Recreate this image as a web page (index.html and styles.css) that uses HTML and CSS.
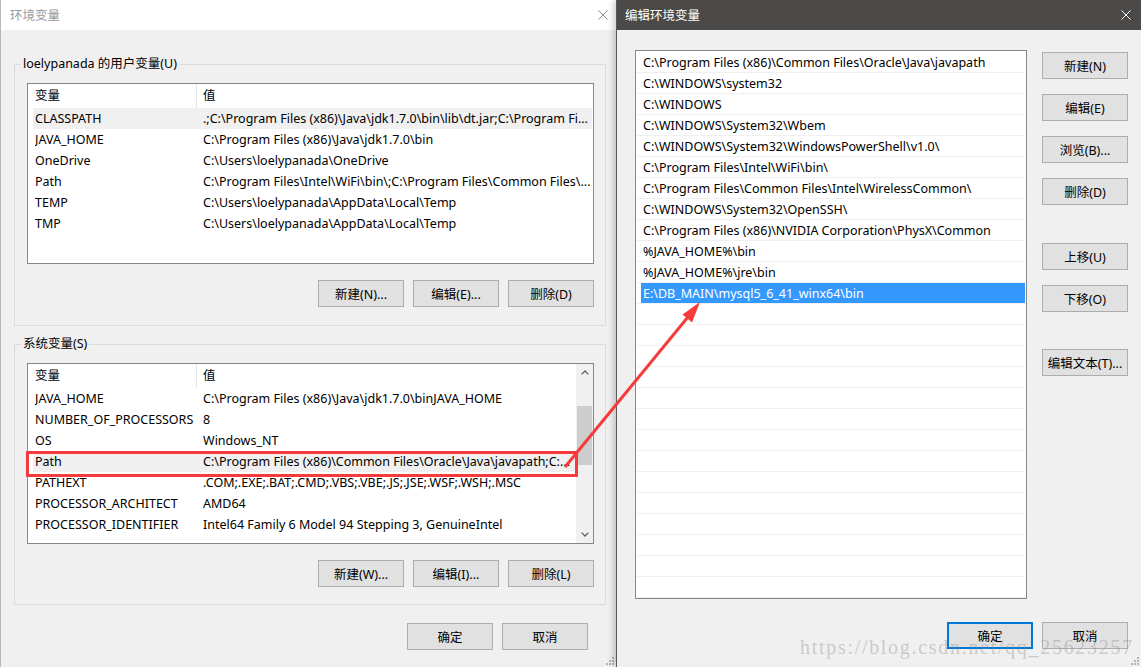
FILE: index.html
```html
<!DOCTYPE html>
<html lang="zh-CN">

<head>
    <meta charset="UTF-8">
    <title>环境变量</title>
    <link rel="stylesheet" href="styles.css">
</head>

<body>
    <div class="desk">

        <!-- 环境变量 dialog (inactive) -->
        <div class="dialog env-dialog">
            <div class="titlebar">
                <span class="title">环境变量</span>
                <svg class="close" viewBox="0 0 10 10"><path d="M0.5 0.5L9.5 9.5M9.5 0.5L0.5 9.5" /></svg>
            </div>
            <div class="env-body">
                <fieldset class="group user-group">
                    <legend>loelypanada 的用户变量(U)</legend>
                    <div class="group-body">
                        <div class="listview">
                            <div class="lv-head">
                                <span class="col-name">变量</span>
                                <span class="col-value">值</span>
                            </div>
                            <div class="lv-row selected"><span class="col-name">CLASSPATH</span><span class="col-value">.;C:\Program Files (x86)\Java\jdk1.7.0\bin\lib\dt.jar;C:\Program Fi...</span></div>
                            <div class="lv-row"><span class="col-name">JAVA_HOME</span><span class="col-value">C:\Program Files (x86)\Java\jdk1.7.0\bin</span></div>
                            <div class="lv-row"><span class="col-name">OneDrive</span><span class="col-value">C:\Users\loelypanada\OneDrive</span></div>
                            <div class="lv-row"><span class="col-name">Path</span><span class="col-value">C:\Program Files\Intel\WiFi\bin\;C:\Program Files\Common Files\...</span></div>
                            <div class="lv-row"><span class="col-name">TEMP</span><span class="col-value">C:\Users\loelypanada\AppData\Local\Temp</span></div>
                            <div class="lv-row"><span class="col-name">TMP</span><span class="col-value">C:\Users\loelypanada\AppData\Local\Temp</span></div>
                        </div>
                        <div class="button-row">
                            <button class="btn">新建(N)...</button>
                            <button class="btn">编辑(E)...</button>
                            <button class="btn">删除(D)</button>
                        </div>
                    </div>
                </fieldset>

                <fieldset class="group sys-group">
                    <legend>系统变量(S)</legend>
                    <div class="group-body">
                        <div class="listview with-scroll">
                            <div class="lv-main">
                                <div class="lv-head">
                                    <span class="col-name">变量</span>
                                    <span class="col-value">值</span>
                                </div>
                                <div class="lv-row"><span class="col-name">JAVA_HOME</span><span class="col-value">C:\Program Files (x86)\Java\jdk1.7.0\binJAVA_HOME</span></div>
                                <div class="lv-row"><span class="col-name">NUMBER_OF_PROCESSORS</span><span class="col-value">8</span></div>
                                <div class="lv-row"><span class="col-name">OS</span><span class="col-value">Windows_NT</span></div>
                                <div class="lv-row selected"><span class="col-name">Path</span><span class="col-value">C:\Program Files (x86)\Common Files\Oracle\Java\javapath;C:...</span></div>
                                <div class="lv-row"><span class="col-name">PATHEXT</span><span class="col-value">.COM;.EXE;.BAT;.CMD;.VBS;.VBE;.JS;.JSE;.WSF;.WSH;.MSC</span></div>
                                <div class="lv-row"><span class="col-name">PROCESSOR_ARCHITECT</span><span class="col-value">AMD64</span></div>
                                <div class="lv-row"><span class="col-name">PROCESSOR_IDENTIFIER</span><span class="col-value">Intel64 Family 6 Model 94 Stepping 3, GenuineIntel</span></div>
                            </div>
                            <div class="vscroll">
                                <div class="sb-arrow"><svg viewBox="0 0 8 5"><path d="M0.6 4.4L4 1L7.4 4.4" /></svg></div>
                                <div class="sb-track"><div class="sb-thumb"></div></div>
                                <div class="sb-arrow"><svg viewBox="0 0 8 5"><path d="M0.6 0.6L4 4L7.4 0.6" /></svg></div>
                            </div>
                        </div>
                        <div class="button-row">
                            <button class="btn">新建(W)...</button>
                            <button class="btn">编辑(I)...</button>
                            <button class="btn">删除(L)</button>
                        </div>
                    </div>
                </fieldset>

                <div class="dialog-foot env-foot">
                    <button class="btn">确定</button>
                    <button class="btn">取消</button>
                </div>
            </div>
            <svg class="grip" viewBox="0 0 10 10">
                <rect x="8" y="2" width="2" height="2" />
                <rect x="5" y="5" width="2" height="2" />
                <rect x="8" y="5" width="2" height="2" />
                <rect x="2" y="8" width="2" height="2" />
                <rect x="5" y="8" width="2" height="2" />
                <rect x="8" y="8" width="2" height="2" />
            </svg>
        </div>

        <!-- 编辑环境变量 dialog (active) -->
        <div class="dialog edit-dialog">
            <div class="titlebar">
                <span class="title">编辑环境变量</span>
                <svg class="close" viewBox="0 0 10 10"><path d="M0.5 0.5L9.5 9.5M9.5 0.5L0.5 9.5" /></svg>
            </div>
            <div class="edit-body">
                <div class="path-list">
                    <div class="path-row"><span class="path-cell">C:\Program Files (x86)\Common Files\Oracle\Java\javapath</span></div>
                    <div class="path-row"><span class="path-cell">C:\WINDOWS\system32</span></div>
                    <div class="path-row"><span class="path-cell">C:\WINDOWS</span></div>
                    <div class="path-row"><span class="path-cell">C:\WINDOWS\System32\Wbem</span></div>
                    <div class="path-row"><span class="path-cell">C:\WINDOWS\System32\WindowsPowerShell\v1.0\</span></div>
                    <div class="path-row"><span class="path-cell">C:\Program Files\Intel\WiFi\bin\</span></div>
                    <div class="path-row"><span class="path-cell">C:\Program Files\Common Files\Intel\WirelessCommon\</span></div>
                    <div class="path-row"><span class="path-cell">C:\WINDOWS\System32\OpenSSH\</span></div>
                    <div class="path-row"><span class="path-cell">C:\Program Files (x86)\NVIDIA Corporation\PhysX\Common</span></div>
                    <div class="path-row"><span class="path-cell">%JAVA_HOME%\bin</span></div>
                    <div class="path-row"><span class="path-cell">%JAVA_HOME%\jre\bin</span></div>
                    <div class="path-row selected"><span class="path-cell">E:\DB_MAIN\mysql5_6_41_winx64\bin</span></div>
                    <div class="path-row"><span class="path-cell"></span></div>
                    <div class="path-row"><span class="path-cell"></span></div>
                    <div class="path-row"><span class="path-cell"></span></div>
                    <div class="path-row"><span class="path-cell"></span></div>
                    <div class="path-row"><span class="path-cell"></span></div>
                    <div class="path-row"><span class="path-cell"></span></div>
                    <div class="path-row"><span class="path-cell"></span></div>
                    <div class="path-row"><span class="path-cell"></span></div>
                    <div class="path-row"><span class="path-cell"></span></div>
                    <div class="path-row"><span class="path-cell"></span></div>
                    <div class="path-row"><span class="path-cell"></span></div>
                    <div class="path-row"><span class="path-cell"></span></div>
                    <div class="path-row"><span class="path-cell"></span></div>
                    <div class="path-row"><span class="path-cell"></span></div>
                </div>
                <div class="side-buttons">
                    <button class="btn">新建(N)</button>
                    <button class="btn">编辑(E)</button>
                    <button class="btn">浏览(B)...</button>
                    <button class="btn">删除(D)</button>
                    <button class="btn move-up">上移(U)</button>
                    <button class="btn">下移(O)</button>
                    <button class="btn edit-text">编辑文本(T)...</button>
                </div>
            </div>
            <div class="dialog-foot edit-foot">
                <button class="btn primary">确定</button>
                <button class="btn">取消</button>
            </div>
            <svg class="grip" viewBox="0 0 10 10">
                <rect x="8" y="2" width="2" height="2" />
                <rect x="5" y="5" width="2" height="2" />
                <rect x="8" y="5" width="2" height="2" />
                <rect x="2" y="8" width="2" height="2" />
                <rect x="5" y="8" width="2" height="2" />
                <rect x="8" y="8" width="2" height="2" />
            </svg>
        </div>

        <!-- red annotation drawn over both dialogs -->
        <svg class="annot" viewBox="0 0 1141 667">
            <rect x="27.5" y="452.5" width="549" height="23" />
            <line x1="565" y1="467" x2="688" y2="317" />
            <polygon points="700,302 682.5,314.5 692,322.5" />
        </svg>

        <div class="watermark">https://blog.csdn.net/qq_25623257</div>
    </div>
</body>

</html>
```

FILE: styles.css
```css
html,
body {
    margin: 0;
    padding: 0;
}

body {
    font-family: "Noto Sans", "Noto Sans CJK SC", sans-serif;
    font-size: 12.5px;
    color: #000;
    background: #f0f0f0;
    overflow: hidden;
}

.desk {
    position: relative;
    display: flex;
    width: 1141px;
    height: 667px;
}

/* Dialog frames */
.dialog {
    position: relative;
    display: flex;
    flex-direction: column;
    background: #f0f0f0;
    box-sizing: border-box;
}

.env-dialog {
    width: 616px;
    flex-shrink: 0;
    border-left: 1px solid #b9b9b9;
}

.edit-dialog {
    flex: 1;
    border-left: 1px solid #5a5a5a;
    box-shadow: -3px 0 6px rgba(0, 0, 0, 0.18);
}

.titlebar {
    height: 30px;
    flex-shrink: 0;
    display: flex;
    align-items: center;
    justify-content: space-between;
    padding: 0 8px 1px 9px;
    box-sizing: border-box;
    background: #fff;
}

.env-dialog .title {
    color: #999;
}

.edit-dialog .titlebar {
    background: #4b4a48;
    padding: 0 10px 1px 8px;
}

.edit-dialog .title {
    color: #fff;
}

.close {
    width: 10px;
    height: 10px;
    fill: none;
    stroke: #8c8c8c;
    stroke-width: 1;
}

.edit-dialog .close {
    stroke: #fff;
}

/* Buttons */
.btn {
    width: 86px;
    height: 27px;
    margin: 0;
    padding: 0;
    box-sizing: border-box;
    border: 1px solid #adadad;
    background: #e1e1e1;
    font: inherit;
    color: #000;
    white-space: nowrap;
}

.btn.primary {
    border: 2px solid #0078d7;
}

/* Left dialog */
.env-body {
    padding: 26px 10px 0 13px;
}

.group {
    margin: 0;
    padding: 0;
    min-width: 0;
    border: 1px solid #dcdcdc;
}

.group legend {
    margin-left: 6px;
    padding: 0 2px;
    line-height: 16px;
}

.group + .group {
    margin-top: 10px;
}

.group-body {
    padding: 11px 11px 17px 12px;
}

.user-group .group-body {
    padding-bottom: 18px;
}

.listview {
    height: 181px;
    box-sizing: border-box;
    border: 1px solid #828790;
    background: #fff;
    overflow: hidden;
}

.listview.with-scroll {
    display: flex;
}

.lv-main {
    flex: 1;
    min-width: 0;
}

.lv-head {
    display: flex;
    height: 24px;
    line-height: 24px;
    padding-left: 7px;
}

.lv-head .col-name {
    width: 162px;
    box-sizing: border-box;
    border-right: 1px solid #e5e5e5;
}

.lv-head .col-value {
    padding-left: 6px;
}

.lv-row {
    display: flex;
    height: 21px;
    box-sizing: border-box;
    padding: 1px 0 0 2px;
    line-height: 20px;
    margin: 0 1px 0 5px;
    white-space: nowrap;
}

.lv-row.selected {
    background: #f0f0f0;
}

.lv-row .col-name {
    width: 168px;
    flex-shrink: 0;
    overflow: hidden;
}

.lv-row .col-value {
    flex: 1;
    min-width: 0;
    overflow: hidden;
}

/* Scrollbar of the system list */
.vscroll {
    width: 17px;
    flex-shrink: 0;
    display: flex;
    flex-direction: column;
    background: #f0f0f0;
}

.sb-arrow {
    height: 17px;
    display: flex;
    align-items: center;
    justify-content: center;
}

.sb-arrow svg {
    width: 8px;
    height: 5px;
    fill: none;
    stroke: #606060;
    stroke-width: 1.3;
}

.sb-track {
    flex: 1;
}

.sb-thumb {
    margin: 25px 1px 0;
    height: 59px;
    background: #cdcdcd;
}

.button-row {
    display: flex;
    justify-content: flex-end;
    gap: 9px;
    margin-top: 16px;
}

.dialog-foot {
    display: flex;
    justify-content: flex-end;
    gap: 9px;
}

.env-foot {
    padding: 18px 18px 0 0;
}

/* Right dialog */
.edit-body {
    display: flex;
    gap: 15px;
    padding: 20px 13px 0 18px;
}

.path-list {
    width: 392px;
    height: 549px;
    flex-shrink: 0;
    box-sizing: border-box;
    padding-top: 1px;
    border: 1px solid #828790;
    background: #fff;
    overflow: hidden;
}

.path-row {
    display: flex;
    height: 20px;
    margin: 0 1px;
    border-bottom: 1px solid #f0f0f0;
}

.path-cell {
    flex: 1;
    margin-left: 4px;
    padding: 1px 0 0 2px;
    line-height: 19px;
    white-space: nowrap;
}

.path-row.selected .path-cell {
    background: #3399ff;
    color: #fff;
}

.side-buttons {
    display: flex;
    flex-direction: column;
    gap: 15px;
    padding-top: 2px;
}

.side-buttons .move-up {
    margin-top: 23px;
}

.side-buttons .edit-text {
    margin-top: 22px;
}

.edit-foot {
    padding: 23px 13px 0 0;
}

/* Resize grips */
.grip {
    position: absolute;
    right: 2px;
    bottom: 2px;
    width: 10px;
    height: 10px;
    fill: #b4b4b4;
}

/* Annotation overlay */
.annot {
    position: absolute;
    left: 0;
    top: 0;
    width: 1141px;
    height: 667px;
    pointer-events: none;
}

.annot rect,
.annot line {
    fill: none;
    stroke: #f53b3b;
    stroke-width: 3;
}

.annot polygon {
    fill: #f53b3b;
}

.watermark {
    position: absolute;
    left: 800px;
    top: 633px;
    font-family: "Liberation Serif", serif;
    font-size: 20px;
    line-height: 28px;
    letter-spacing: 1.7px;
    color: rgba(140, 140, 140, 0.4);
    pointer-events: none;
    white-space: nowrap;
}
```
